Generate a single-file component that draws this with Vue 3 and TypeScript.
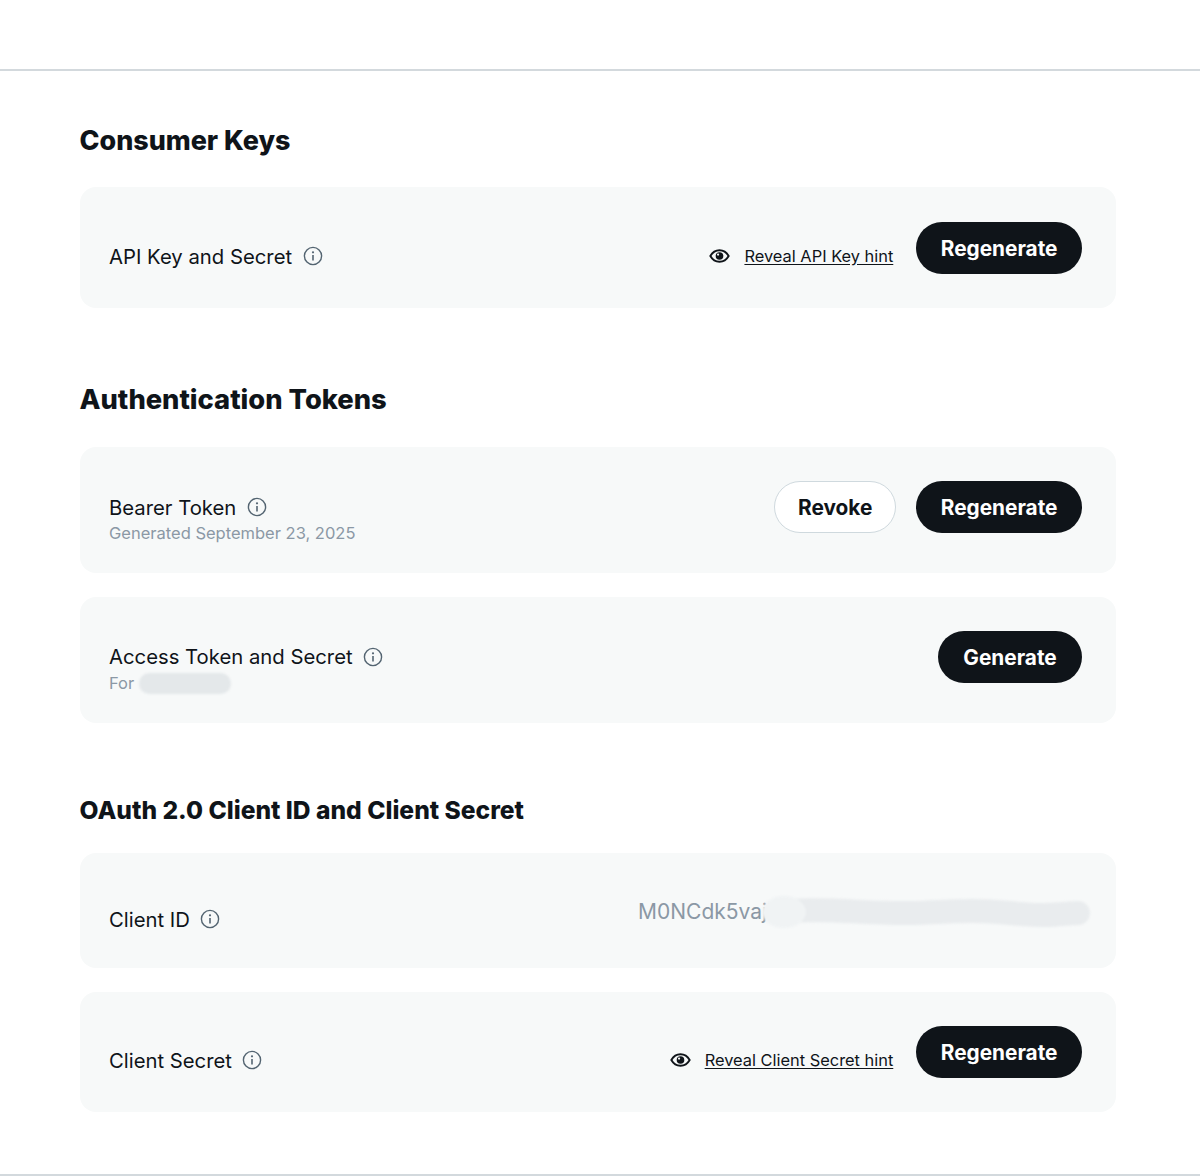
<script setup lang="ts">
interface Row {
  label: string
  sub?: string
  blurSub?: boolean
  link?: string
  buttons: { text: string; outline?: boolean }[]
  value?: string
  cls: string
}
const keys: Row[] = [
  { label: 'API Key and Secret', link: 'Reveal API Key hint', buttons: [{ text: 'Regenerate' }], cls: 'r-api' },
]
const tokens: Row[] = [
  {
    label: 'Bearer Token',
    sub: 'Generated September 23, 2025',
    buttons: [{ text: 'Revoke', outline: true }, { text: 'Regenerate' }],
    cls: 'r-bearer',
  },
  { label: 'Access Token and Secret', sub: 'For', blurSub: true, buttons: [{ text: 'Generate' }], cls: 'r-access' },
]
const oauth: Row[] = [
  { label: 'Client ID', value: 'M0NCdk5vajl', buttons: [], cls: 'r-id' },
  { label: 'Client Secret', link: 'Reveal Client Secret hint', buttons: [{ text: 'Regenerate' }], cls: 'r-secret' },
]
const sections = [
  { title: 'Consumer Keys', cls: 's-keys', rows: keys },
  { title: 'Authentication Tokens', cls: 's-tokens', rows: tokens },
  { title: 'OAuth 2.0 Client ID and Client Secret', cls: 's-oauth', rows: oauth },
]
</script>

<template>
  <div class="page">
    <main class="content">
      <section v-for="s in sections" :key="s.title" class="section" :class="s.cls">
        <h2 class="title">{{ s.title }}</h2>
        <div v-for="r in s.rows" :key="r.label" class="card" :class="r.cls">
          <div class="left">
            <div class="label-line">
              <span class="label">{{ r.label }}</span>
              <svg class="info" viewBox="0 0 20 20" aria-hidden="true">
                <circle cx="10" cy="10" r="8.6" fill="none" stroke="#536471" stroke-width="1.4" />
                <circle cx="10" cy="6.3" r="1.1" fill="#536471" />
                <path d="M10 9v5.4" stroke="#536471" stroke-width="1.6" fill="none" />
              </svg>
            </div>
            <div v-if="r.sub" class="sub">
              {{ r.sub }}<span v-if="r.blurSub" class="smudge"></span>
            </div>
          </div>
          <div v-if="r.value" class="value">
            {{ r.value }}
            <svg class="scribble" viewBox="0 0 330 40" aria-hidden="true">
              <path
                d="M30 20c40-3 80 3 120 2s60-4 100 0 40 1 68 0"
                fill="none"
                stroke="#e9ecee"
                stroke-width="24"
                stroke-linecap="round"
              />
              <ellipse cx="24" cy="21" rx="22" ry="16" fill="#f0f3f4" />
            </svg>
          </div>
          <div class="right">
            <a v-if="r.link" class="reveal" href="#">
              <svg class="eye" viewBox="0 0 22 16" aria-hidden="true">
                <path
                  d="M1.4 8C3.6 4.1 7 2 11 2s7.4 2.1 9.6 6c-2.2 3.9-5.6 6-9.6 6s-7.4-2.1-9.6-6z"
                  fill="none"
                  stroke="#0f1419"
                  stroke-width="2"
                />
                <circle cx="11" cy="8" r="4" fill="#0f1419" />
                <circle cx="9.5" cy="6.5" r="1.2" fill="#f7f9f9" />
              </svg>
              <span class="reveal-text">{{ r.link }}</span>
            </a>
            <button
              v-for="b in r.buttons"
              :key="b.text"
              class="btn"
              :class="{ outline: b.outline }"
              type="button"
            >
              {{ b.text }}
            </button>
          </div>
        </div>
      </section>
    </main>
  </div>
</template>

<style>
html,
body {
  margin: 0;
  background: #fff;
}
</style>

<style scoped>
.page {
  width: 1200px;
  height: 1176px;
  box-sizing: border-box;
  background: #fff;
  font-family: Inter, "Liberation Sans", sans-serif;
  color: #0f1419;
  padding-top: 69px;
  overflow: hidden;
}
.content {
  border-top: 2px solid #d3d9dd;
  border-bottom: 2px solid #d3d9dd;
  height: 1107px;
  box-sizing: border-box;
  padding: 0 84px 0 80px;
}
.section {
  display: flex;
  flex-direction: column;
  gap: 24px;
}
.s-keys {
  padding-top: 51px;
}
.s-tokens {
  padding-top: 74px;
}
.s-oauth {
  padding-top: 71px;
}
.title {
  margin: 0 0 0 -0.5px;
  font-size: 27.3px;
  line-height: 36px;
  font-weight: 800;
  color: #0f1419;
}
.s-keys .title {
  font-size: 26.9px;
  margin-bottom: 5px;
}
.s-tokens .title {
  margin-bottom: 5px;
}
.s-oauth .title {
  font-size: 24.6px;
  line-height: 32px;
  margin-bottom: 3px;
}
.card {
  display: flex;
  justify-content: space-between;
  background: #f7f9f9;
  border-radius: 16px;
  padding: 34px 34px 34px 29px;
  box-sizing: border-box;
  position: relative;
}
.r-api {
  height: 121px;
  padding-top: 35px;
}
.r-bearer,
.r-access {
  height: 126px;
}
.r-id {
  height: 115px;
}
.r-secret {
  height: 120px;
}
.left {
  display: flex;
  flex-direction: column;
  padding-top: 22px;
}
.r-bearer .left {
  padding-top: 14px;
}
.r-access .left {
  padding-top: 13px;
}
.r-id .left {
  padding-top: 20px;
}
.r-secret .left {
  padding-top: 22px;
}
.label-line {
  display: flex;
  align-items: center;
  gap: 10.5px;
  height: 26px;
}
.label {
  font-size: 20.3px;
  line-height: 26px;
  color: #0f1419;
}
.info {
  width: 20px;
  height: 20px;
  margin-bottom: 2px;
}
.r-access .info {
  margin-bottom: 0;
}
.sub {
  font-size: 16.5px;
  line-height: 25px;
  color: #8b98a5;
  display: flex;
  align-items: center;
}
.r-access .sub {
  margin-top: 1px;
}
.smudge {
  display: inline-block;
  width: 92px;
  height: 21px;
  margin-left: 5px;
  border-radius: 10.5px;
  background: #e4e8ea;
  filter: blur(1px);
}
.right {
  display: flex;
  align-items: flex-start;
  gap: 20px;
}
.reveal {
  display: flex;
  align-items: center;
  gap: 14px;
  margin-top: 23px;
  color: #0f1419;
  text-decoration: none;
  margin-right: 3px;
}
.eye {
  width: 21px;
  height: 16px;
}
.reveal-text {
  font-size: 16.4px;
  line-height: 22px;
  text-decoration: underline;
  text-underline-offset: 2px;
}
.btn {
  height: 52px;
  min-width: 144px;
  border-radius: 26px;
  border: 0;
  background: #0f1419;
  color: #fff;
  font-family: Inter, "Liberation Sans", sans-serif;
  font-size: 20.8px;
  font-weight: 700;
  padding: 0 24.5px;
  cursor: pointer;
}
.btn.outline {
  min-width: 122px;
  background: #fff;
  color: #0f1419;
  border: 1px solid #cfd9de;
  padding: 0 23px;
}
.value {
  position: absolute;
  left: 558px;
  top: 46px;
  width: 450px;
  height: 26px;
  font-size: 21px;
  line-height: 26px;
  color: #8b98a5;
  white-space: nowrap;
}
.scribble {
  position: absolute;
  left: 122px;
  top: -8px;
  width: 330px;
  height: 40px;
  filter: blur(1.2px);
}
</style>
